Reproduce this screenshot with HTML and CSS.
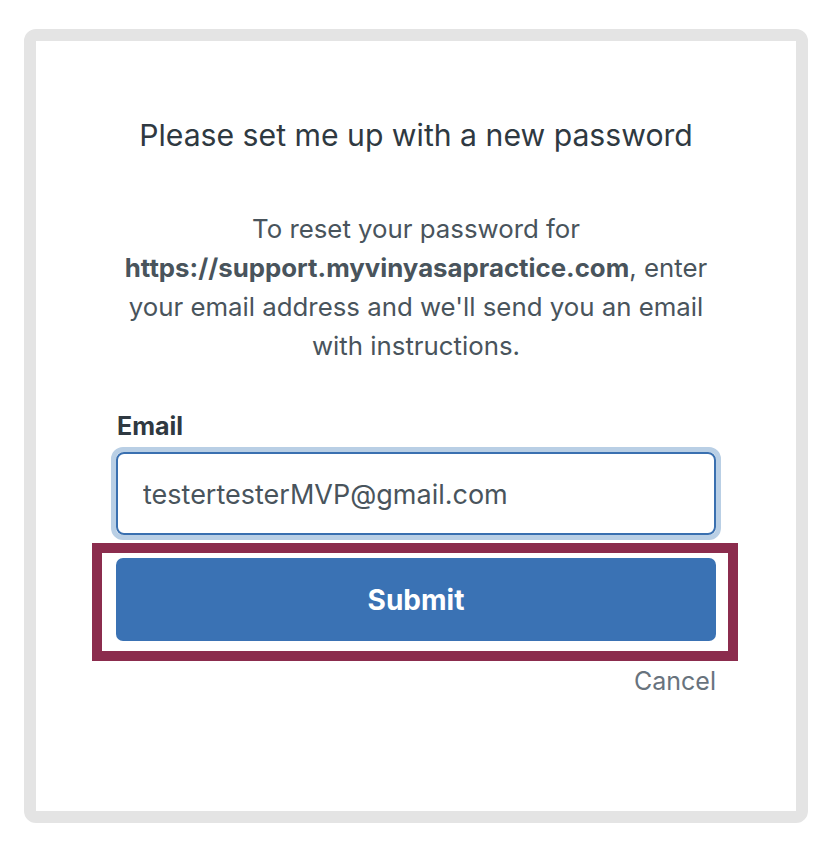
FILE: index.html
```html
<!DOCTYPE html>
<html>
<head>
<meta charset="utf-8">
<link rel="stylesheet" href="styles.css">
</head>
<body>
<div class="frame">
  <div class="content">
    <h1 class="title">Please set me up with a new password</h1>
    <p class="intro">To reset your password for <strong>https://support.myvinyasapractice.com</strong>, enter your email address and we'll send you an email with instructions.</p>
    <form class="form">
      <label class="label" for="email">Email</label>
      <div class="input-ring"><input class="input" id="email" type="text" value="testertesterMVP@gmail.com"></div>
      <div class="btn-wrap">
        <button class="submit" type="button">Submit</button>
        <div class="highlight"></div>
      </div>
      <div class="cancel-row"><a class="cancel">Cancel</a></div>
    </form>
  </div>
</div>
</body>
</html>
```
FILE: styles.css
```css
html, body {
  margin: 0;
  padding: 0;
  background: #ffffff;
}
body {
  font-family: "Inter", "Liberation Sans", sans-serif;
}
.frame {
  margin: 29px 0 0 24px;
  width: 784px;
  height: 794px;
  box-sizing: border-box;
  border: 12px solid #e4e4e4;
  border-radius: 12px;
  background: #fff;
}
.content {
  padding: 76px 80px 0;
}
.title {
  margin: 0;
  font-size: 30.2px;
  font-weight: 400;
  color: #2f3941;
  text-align: center;
  line-height: 36px;
}
.intro {
  margin: 56px 0 0;
  font-size: 25.8px;
  line-height: 39px;
  color: #49545c;
  text-align: center;
}
.intro strong {
  font-weight: 700;
}
.form {
  margin-top: 46px;
}
.label {
  display: block;
  font-size: 25px;
  font-weight: 700;
  color: #2f3941;
  line-height: 30px;
  padding-left: 1px;
}
.input-ring {
  margin: 6px -5px 0;
  border: 5px solid #b9cfe5;
  border-radius: 12px;
}
.input {
  display: block;
  box-sizing: border-box;
  width: 100%;
  height: 83px;
  border: 2px solid #3a70b0;
  border-radius: 8px;
  padding: 2px 25px 0;
  font-family: inherit;
  font-size: 27px;
  color: #49545c;
  outline: none;
  background: #fff;
}
.btn-wrap {
  position: relative;
  margin-top: 18px;
}
.submit {
  display: block;
  width: 100%;
  height: 83px;
  border: none;
  border-radius: 7px;
  background: #3a72b4;
  color: #fff;
  font-family: inherit;
  font-size: 28px;
  font-weight: 700;
}
.highlight {
  position: absolute;
  left: -24px;
  right: -22px;
  top: -15px;
  bottom: -20px;
  border: 10px solid #8b2c4d;
  pointer-events: none;
}
.cancel-row {
  display: flex;
  justify-content: flex-end;
  margin-top: 25px;
}
.cancel {
  font-size: 25px;
  color: #68737d;
  line-height: 30px;
}
```
